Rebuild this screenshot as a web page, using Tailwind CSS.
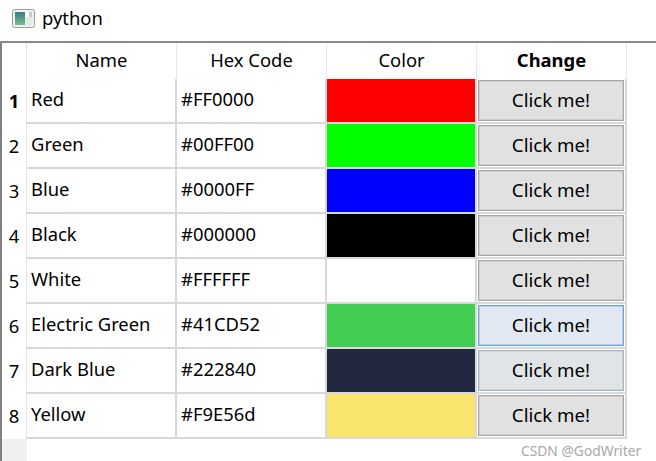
<!DOCTYPE html>
<html><head><meta charset="utf-8"><script src="https://cdn.jsdelivr.net/npm/@tailwindcss/browser@4"></script></head>
<body class="m-0 bg-white">
<div class="relative w-[656px] h-[461px] overflow-hidden bg-white text-[18.4px] text-black font-['Noto_Sans','Open_Sans',sans-serif]">
  <header class="h-[41px] flex items-center gap-[7px] pl-[12px] pb-[4px]">
    <svg width="23" height="19" viewBox="0 0 23 19"><rect x="0.5" y="0.5" width="22" height="18" rx="2" fill="#eef0f0" stroke="#9a9ea0"/><defs><linearGradient id="g" x1="0" y1="0" x2="0" y2="1"><stop offset="0" stop-color="#2f7d8c"/><stop offset="1" stop-color="#7dbb84"/></linearGradient></defs><rect x="3" y="3" width="10" height="13" fill="url(#g)"/><rect x="13" y="3" width="7" height="5" fill="#fff"/><rect x="17" y="3" width="3" height="9" fill="#c4ccc8"/><rect x="13" y="8" width="7" height="8" fill="#e4eae6"/></svg>
    <span class="leading-none">python</span>
  </header>
  <div class="h-[2px] bg-[#8a8a8e]"></div>
  <main class="flex h-[418px]">
    <div class="w-[2px] bg-[#808080]"></div>
    <div class="flex flex-col w-[25px]">
      <div class="h-[36px] border-r border-[#e4e4e4]"></div>
      <div class="h-[45px] pb-[2px] flex items-center justify-center border-r border-[#e4e4e4] font-bold">1</div>
      <div class="h-[45px] pb-[2px] flex items-center justify-center border-r border-[#e4e4e4]">2</div>
      <div class="h-[45px] pb-[2px] flex items-center justify-center border-r border-[#e4e4e4]">3</div>
      <div class="h-[45px] pb-[2px] flex items-center justify-center border-r border-[#e4e4e4]">4</div>
      <div class="h-[45px] pb-[2px] flex items-center justify-center border-r border-[#e4e4e4]">5</div>
      <div class="h-[45px] pb-[2px] flex items-center justify-center border-r border-[#e4e4e4]">6</div>
      <div class="h-[45px] pb-[2px] flex items-center justify-center border-r border-[#e4e4e4]">7</div>
      <div class="h-[45px] pb-[2px] flex items-center justify-center border-r border-[#e4e4e4]">8</div>
      <div class="flex-1 bg-[#f0f0f0]"></div>
    </div>
    <div class="grid grid-cols-[150px_150px_150px_150px] grid-rows-[36px_repeat(8,45px)] content-start">
      <div class="pb-[2px] flex items-center justify-center border-r border-[#e8e8e8]">Name</div>
      <div class="pb-[2px] flex items-center justify-center border-r border-[#e8e8e8]">Hex Code</div>
      <div class="pb-[2px] flex items-center justify-center border-r border-[#e8e8e8]">Color</div>
      <div class="pb-[2px] flex items-center justify-center border-r border-[#e8e8e8] font-bold">Change</div>

      <div class="flex items-center pl-[4px] pb-[4px] border-r-2 border-b-2 border-[#d8d8d8]">Red</div>
      <div class="flex items-center pl-[4px] pb-[4px] border-r-2 border-b-2 border-[#d8d8d8]">#FF0000</div>
      <div class="border-r-2 border-b-2 border-[#d8d8d8] bg-[#ff0000]"></div>
      <div class="p-[1px] border-r-2 border-b-2 border-[#d8d8d8]"><button class="w-full h-full pb-[1px] text-[18.7px] bg-[#e1e1e1] border border-[#a6a6a6] shadow-[inset_0_0_0_1px_#cfcfcf]">Click me!</button></div>

      <div class="flex items-center pl-[4px] pb-[4px] border-r-2 border-b-2 border-[#d8d8d8]">Green</div>
      <div class="flex items-center pl-[4px] pb-[4px] border-r-2 border-b-2 border-[#d8d8d8]">#00FF00</div>
      <div class="border-r-2 border-b-2 border-[#d8d8d8] bg-[#00ff00]"></div>
      <div class="p-[1px] border-r-2 border-b-2 border-[#d8d8d8]"><button class="w-full h-full pb-[1px] text-[18.7px] bg-[#e1e1e1] border border-[#a6a6a6] shadow-[inset_0_0_0_1px_#cfcfcf]">Click me!</button></div>

      <div class="flex items-center pl-[4px] pb-[4px] border-r-2 border-b-2 border-[#d8d8d8]">Blue</div>
      <div class="flex items-center pl-[4px] pb-[4px] border-r-2 border-b-2 border-[#d8d8d8]">#0000FF</div>
      <div class="border-r-2 border-b-2 border-[#d8d8d8] bg-[#0000ff]"></div>
      <div class="p-[1px] border-r-2 border-b-2 border-[#d8d8d8]"><button class="w-full h-full pb-[1px] text-[18.7px] bg-[#e1e1e1] border border-[#a6a6a6] shadow-[inset_0_0_0_1px_#cfcfcf]">Click me!</button></div>

      <div class="flex items-center pl-[4px] pb-[4px] border-r-2 border-b-2 border-[#d8d8d8]">Black</div>
      <div class="flex items-center pl-[4px] pb-[4px] border-r-2 border-b-2 border-[#d8d8d8]">#000000</div>
      <div class="border-r-2 border-b-2 border-[#d8d8d8] bg-[#000000]"></div>
      <div class="p-[1px] border-r-2 border-b-2 border-[#d8d8d8]"><button class="w-full h-full pb-[1px] text-[18.7px] bg-[#e1e1e1] border border-[#a6a6a6] shadow-[inset_0_0_0_1px_#cfcfcf]">Click me!</button></div>

      <div class="flex items-center pl-[4px] pb-[4px] border-r-2 border-b-2 border-[#d8d8d8]">White</div>
      <div class="flex items-center pl-[4px] pb-[4px] border-r-2 border-b-2 border-[#d8d8d8]">#FFFFFF</div>
      <div class="border-r-2 border-b-2 border-[#d8d8d8] bg-[#ffffff]"></div>
      <div class="p-[1px] border-r-2 border-b-2 border-[#d8d8d8]"><button class="w-full h-full pb-[1px] text-[18.7px] bg-[#e1e1e1] border border-[#a6a6a6] shadow-[inset_0_0_0_1px_#cfcfcf]">Click me!</button></div>

      <div class="flex items-center pl-[4px] pb-[4px] border-r-2 border-b-2 border-[#d8d8d8]">Electric Green</div>
      <div class="flex items-center pl-[4px] pb-[4px] border-r-2 border-b-2 border-[#d8d8d8]">#41CD52</div>
      <div class="border-r-2 border-b-2 border-[#d8d8d8] bg-[#41cd52]"></div>
      <div class="p-[1px] border-r-2 border-b-2 border-[#d8d8d8]"><button class="w-full h-full pb-[1px] text-[18.7px] bg-[#e1e8f1] border border-[#6ea3d2] shadow-[inset_0_0_0_1px_#b5cfe6]">Click me!</button></div>

      <div class="flex items-center pl-[4px] pb-[4px] border-r-2 border-b-2 border-[#d8d8d8]">Dark Blue</div>
      <div class="flex items-center pl-[4px] pb-[4px] border-r-2 border-b-2 border-[#d8d8d8]">#222840</div>
      <div class="border-r-2 border-b-2 border-[#d8d8d8] bg-[#222840]"></div>
      <div class="p-[1px] border-r-2 border-b-2 border-[#d8d8d8]"><button class="w-full h-full pb-[1px] text-[18.7px] bg-[#e0e4e7] border border-[#9fb6c8] shadow-[inset_0_0_0_1px_#cbd5dc]">Click me!</button></div>

      <div class="flex items-center pl-[4px] pb-[4px] border-r-2 border-b-2 border-[#d8d8d8]">Yellow</div>
      <div class="flex items-center pl-[4px] pb-[4px] border-r-2 border-b-2 border-[#d8d8d8]">#F9E56d</div>
      <div class="border-r-2 border-b-2 border-[#d8d8d8] bg-[#f9e56d]"></div>
      <div class="p-[1px] border-r-2 border-b-2 border-[#d8d8d8]"><button class="w-full h-full pb-[1px] text-[18.7px] bg-[#e1e1e1] border border-[#a6a6a6] shadow-[inset_0_0_0_1px_#cfcfcf]">Click me!</button></div>
    </div>
  </main>
  <span class="absolute left-[521px] top-[441px] text-[13.8px] leading-[20px] text-[#a8a8a8]">CSDN @GodWriter</span>
</div>
</body></html>
